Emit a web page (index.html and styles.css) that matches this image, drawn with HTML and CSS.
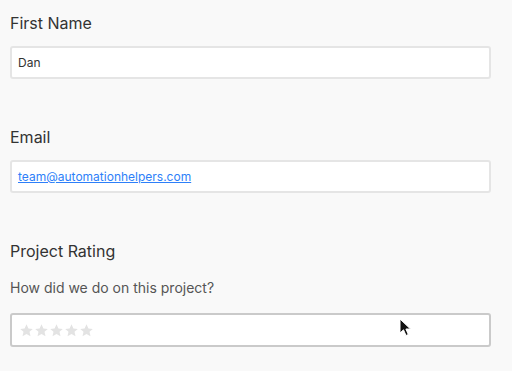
FILE: index.html
```html
<!DOCTYPE html>
<html>
<head>
<meta charset="utf-8">
<link rel="stylesheet" href="styles.css">
</head>
<body>
<div class="form">
  <div class="field">
    <div class="label">First Name</div>
    <div class="input">Dan</div>
  </div>
  <div class="field">
    <div class="label">Email</div>
    <div class="input"><a class="link" href="#">team@automationhelpers.com</a></div>
  </div>
  <div class="field last">
    <div class="label">Project Rating</div>
    <div class="help">How did we do on this project?</div>
    <div class="input rating">
      <svg class="stars" width="76" height="14" viewBox="0 0 76 14">
        <defs>
          <path id="star" d="M6.5 0.3 L8.4 4.4 L12.8 4.9 L9.5 7.8 L10.5 12.2 L6.5 9.9 L2.5 12.2 L3.5 7.8 L0.2 4.9 L4.6 4.4 Z"/>
        </defs>
        <use href="#star" x="0" y="1" fill="#e3e3e3"/>
        <use href="#star" x="15" y="1" fill="#e3e3e3"/>
        <use href="#star" x="30" y="1" fill="#e3e3e3"/>
        <use href="#star" x="45" y="1" fill="#e3e3e3"/>
        <use href="#star" x="60" y="1" fill="#e3e3e3"/>
      </svg>
    </div>
  </div>
  <svg class="cursor" width="14" height="20" viewBox="0 0 14 20">
    <path d="M1 1 L1 15 L4.5 11.8 L7 17.5 L9.3 16.5 L6.9 11 L11.5 11 Z" fill="#111" stroke="#fff" stroke-width="1"/>
  </svg>
</div>
</body>
</html>
```
FILE: styles.css
```css
html, body {
  margin: 0;
  padding: 0;
  background: #f9f9f9;
}
body {
  font-family: Inter, "Liberation Sans", sans-serif;
  color: #333;
}
.form {
  position: relative;
  padding: 13px 21px 0 10px;
}
.field {
  display: flex;
  flex-direction: column;
  margin-bottom: 48px;
}
.field.last {
  margin-bottom: 0;
}
.label {
  font-size: 16px;
  line-height: 20px;
  color: #333;
  margin-bottom: 13px;
}
.input {
  box-sizing: border-box;
  height: 33px;
  background: #fff;
  border: 2px solid #e5e5e5;
  border-radius: 3px;
  padding: 0 6px;
  display: flex;
  align-items: center;
  font-size: 12px;
  color: #333;
}
.link {
  color: #2d7ff9;
  text-decoration: underline;
}
.help {
  font-size: 14px;
  line-height: 17px;
  color: #555;
  margin-top: 5px;
  margin-bottom: 17px;
}
.rating {
  height: 34px;
  border-color: #cacaca;
  padding-left: 8px;
}
.stars {
  display: block;
}
.cursor {
  position: absolute;
  left: 399px;
  top: 318px;
}
```
